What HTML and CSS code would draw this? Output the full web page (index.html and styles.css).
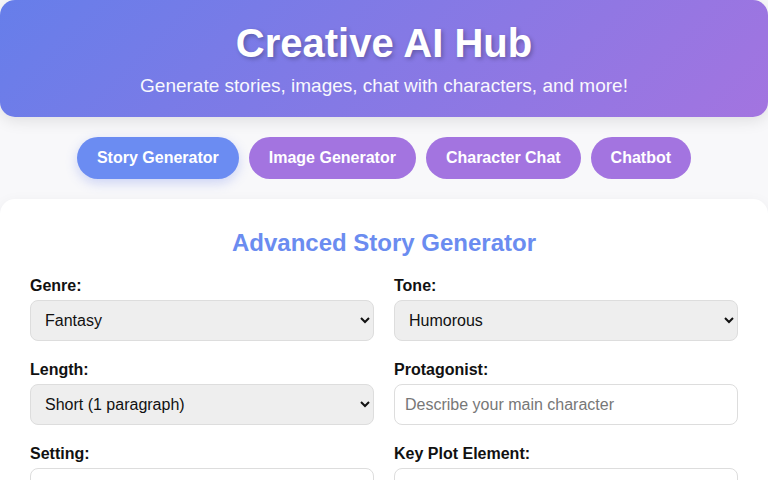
FILE: index.html
```html
<!DOCTYPE html>
<html lang="en">
<head>
<meta charset="utf-8">
<title>Creative AI Hub</title>
<link rel="stylesheet" href="styles.css">
</head>
<body>
<header class="hero">
  <h1 class="hero-title">Creative AI Hub</h1>
  <p class="hero-sub">Generate stories, images, chat with characters, and more!</p>
</header>
<nav class="tabs">
  <button class="tab active">Story Generator</button>
  <button class="tab">Image Generator</button>
  <button class="tab">Character Chat</button>
  <button class="tab">Chatbot</button>
</nav>
<main class="card">
  <h2 class="card-title">Advanced Story Generator</h2>
  <div class="form-grid">
    <div class="field">
      <label class="field-label">Genre:</label>
      <select class="control select"><option>Fantasy</option></select>
    </div>
    <div class="field">
      <label class="field-label">Tone:</label>
      <select class="control select"><option>Humorous</option></select>
    </div>
    <div class="field">
      <label class="field-label">Length:</label>
      <select class="control select"><option>Short (1 paragraph)</option></select>
    </div>
    <div class="field">
      <label class="field-label">Protagonist:</label>
      <input class="control input" type="text" placeholder="Describe your main character">
    </div>
    <div class="field">
      <label class="field-label">Setting:</label>
      <input class="control input" type="text" placeholder="Where does the story take place?">
    </div>
    <div class="field">
      <label class="field-label">Key Plot Element:</label>
      <input class="control input" type="text" placeholder="A key event or object">
    </div>
  </div>
</main>
</body>
</html>
```
FILE: styles.css
```css
* { box-sizing: border-box; }
body {
  margin: 0;
  background: #f8f8fa;
  font-family: "Liberation Sans", Arial, sans-serif;
  color: #222;
}
.hero {
  background: linear-gradient(135deg, #667eea 0%, #a374e0 100%);
  border-radius: 15px;
  padding: 20px 20px 20px;
  text-align: center;
  color: #fff;
  box-shadow: 0 4px 15px rgba(0,0,0,0.1);
}
.hero-title {
  margin: 0 0 9px;
  font-size: 40px;
  line-height: 46px;
  font-weight: bold;
  text-shadow: 2px 2px 4px rgba(0,0,0,0.25);
}
.hero-sub {
  margin: 0;
  font-size: 19px;
  line-height: 22px;
  opacity: 0.95;
}
.tabs {
  display: flex;
  justify-content: center;
  gap: 10px;
  margin: 20px 0;
}
.tab {
  border: none;
  border-radius: 25px;
  padding: 12px 20px;
  font-family: inherit;
  font-size: 16px;
  line-height: 18px;
  font-weight: bold;
  color: #fff;
  background: #a374e0;
}
.tab.active {
  background: #6b8cf2;
  box-shadow: 0 4px 12px rgba(102,126,234,0.3);
}
.card {
  background: #fff;
  border-radius: 15px;
  padding: 30px;
  box-shadow: 0 4px 15px rgba(0,0,0,0.06);
}
.card-title {
  margin: 0 0 20px;
  text-align: center;
  color: #6b8cf0;
  font-size: 24px;
  line-height: 28px;
  font-weight: bold;
}
.form-grid {
  display: grid;
  grid-template-columns: 1fr 1fr;
  column-gap: 20px;
  row-gap: 20px;
}
.field {
  display: flex;
  flex-direction: column;
}
.field-label {
  font-weight: bold;
  font-size: 16px;
  line-height: 18px;
  margin-bottom: 5px;
  color: #111;
}
.control {
  width: 100%;
  height: 41px;
  border: 1px solid #ddd;
  border-radius: 8px;
  padding: 0 10px;
  font-family: inherit;
  font-size: 16px;
  color: #111;
}
.select { background: #eeeeee; }
.input { background: #fff; }
.input::placeholder { color: #777; }
```
